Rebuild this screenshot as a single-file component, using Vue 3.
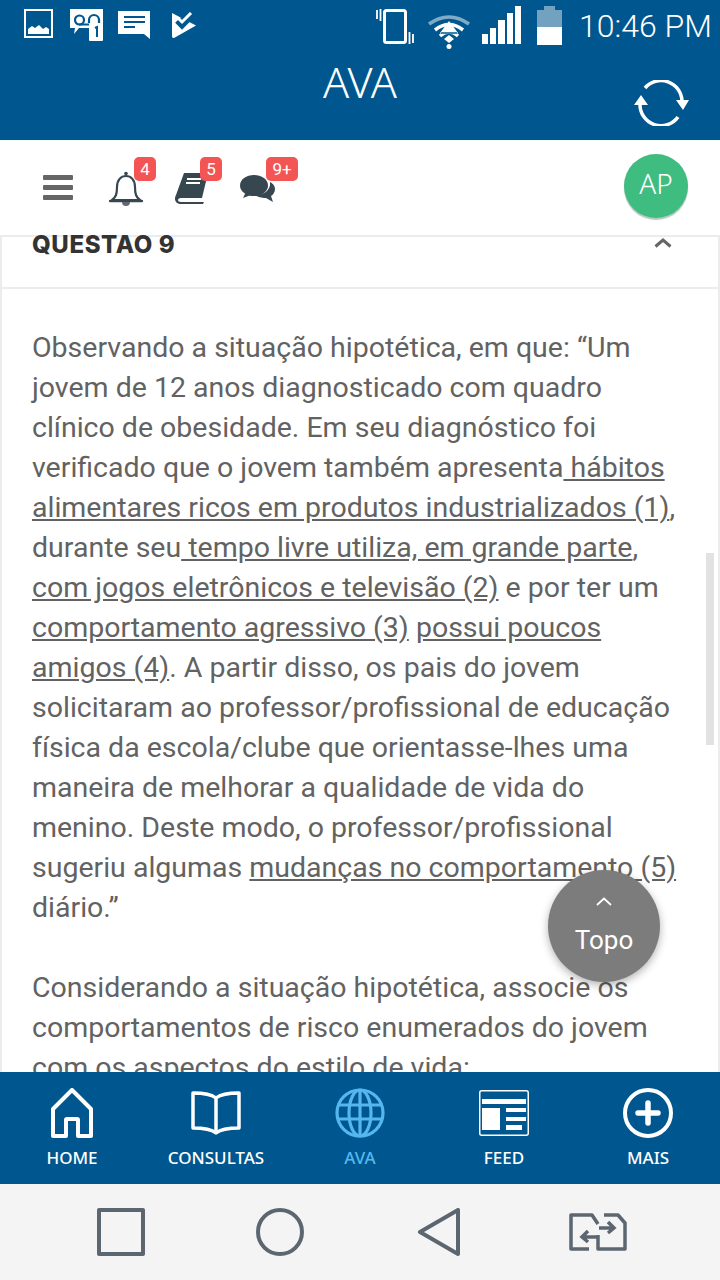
<script setup>
// tela de questao do AVA
const question = 'QUESTAO 9'
</script>

<template>
  <div class="screen">
    <header class="top">
      <div class="status">
        <div class="status-left">
          <svg width="30" height="30" viewBox="0 0 30 30"><rect x="1" y="1" width="27" height="27" fill="none" stroke="#fff" stroke-width="2"/><path d="M4 25v-5l4-3 3 2 4-3 4 4 3-2 3 2v5z" fill="#fff"/></svg>
          <svg class="ml-voice" width="34" height="32" viewBox="0 0 34 32"><path d="M0 0h33v21h-11v-2H9l-5 6 1-6H0z" fill="#fff"/><circle cx="9.500" cy="11" r="4.500" fill="none" stroke="#00578f" stroke-width="2.200"/><path d="M19 14v-3a5 5 0 0 1 10 0v3M9 15.500h15" fill="none" stroke="#00578f" stroke-width="2.200"/><rect x="19" y="14" width="14" height="18" rx="1" fill="#fff"/><path d="M25 19l2-1v10" fill="none" stroke="#00578f" stroke-width="2"/></svg>
          <svg class="ml-msg" width="33" height="30" viewBox="0 0 33 30"><path d="M0 0h32v28l-6-5H0z" fill="#fff"/><path d="M6 6h21M6 11h21M6 16h11" stroke="#00578f" stroke-width="2.200"/></svg>
          <svg class="ml-check" width="26" height="28" viewBox="0 0 26 28"><path d="M1 1l24 12.500L3 26q-2 .5-2-2z" fill="#fff"/><path d="M7 8l4 4 9-9" fill="none" stroke="#00578f" stroke-width="8"/><path d="M7 6l4 4 9-9" fill="none" stroke="#fff" stroke-width="3"/></svg>
        </div>
        <div class="status-right">
          <svg width="40" height="36" viewBox="0 0 40 36"><rect x="8.500" y="1.500" width="21" height="32" rx="2" fill="none" stroke="#fff" stroke-width="3"/><path d="M1 1v9M4.500 0v12M33.500 23v12M37 25v9" stroke="#fff" stroke-width="1.800"/></svg>
          <svg class="ml-wifi" width="44" height="36" viewBox="0 0 44 36"><path d="M2 11Q22-3 42 11" fill="none" stroke="#fff" stroke-opacity=".5" stroke-width="3.500"/><path d="M8 17Q22 6 36 17M13 23Q22 15 31 23" fill="none" stroke="#fff" stroke-width="3.500"/><path d="M22 8l9 12H13z" fill="#fff"/><path d="M14 20h16" stroke="#00578f" stroke-width="1.500"/><path d="M17 26l5 4 5-4-5-4z" fill="#fff"/><circle cx="22" cy="33.500" r="2.500" fill="#fff"/></svg>
          <svg class="ml-signal" width="39" height="38" viewBox="0 0 39 38"><path d="M0 28h6v10H0zM8 22h6v16H8zM16 14h7v24h-7zM25 7h6v31h-6zM33 0h6v38h-6z" fill="#fff"/></svg>
          <svg class="ml-battery" width="25" height="39" viewBox="0 0 25 39"><path d="M7 0h11v4h7v17H0V4h7z" fill="#fff" fill-opacity=".45"/><rect y="21" width="25" height="18" fill="#fff"/></svg>
          <span class="clock">10:46 PM</span>
        </div>
      </div>
      <div class="title-row">
        <h1 class="title">AVA</h1>
        <svg class="refresh" width="56" height="46" viewBox="0 0 56 46"><path d="M12 8A21 21 0 0 1 49 21" fill="none" stroke="#fff" stroke-width="3.500"/><path d="M7 24A21 21 0 0 0 45 37" fill="none" stroke="#fff" stroke-width="3.500"/><path d="M43 20h13l-6 10zM1 25l7-10 7 10z" fill="#fff"/></svg>
      </div>
    </header>

    <nav class="toolbar">
      <div class="burger"><i></i><i></i><i></i></div>
      <div class="tool tool-bell">
        <svg width="34" height="38" viewBox="0 0 34 38"><path d="M3 30c4-3 5-6 5-13 0-7 4-11 9-11s9 4 9 11c0 7 1 10 5 13z" fill="none" stroke="#37474f" stroke-width="2.200" stroke-linejoin="round"/><circle cx="17" cy="3.500" r="1.800" fill="#37474f"/><path d="M1 31h32" stroke="#37474f" stroke-width="2.500" stroke-linecap="round"/><path d="M13 32a4 4 0 0 0 8 0z" fill="#667"/></svg>
        <span class="badge">4</span>
      </div>
      <div class="tool tool-book">
        <svg width="34" height="31" viewBox="0 0 34 31"><path d="M9 0h24l-6 25H6c-2 0-3 1-3 2s1 2 3 2h23l-1 2H6c-3 0-6-2-6-5 0-1 0-2 1-4z" fill="#37474f"/><path d="M12 6h14M11 10h14" stroke="#fff" stroke-width="2.200"/></svg>
        <span class="badge">5</span>
      </div>
      <div class="tool tool-chat">
        <svg width="36" height="29" viewBox="0 0 36 29"><ellipse cx="14" cy="10.500" rx="14" ry="10.500" fill="#37474f"/><path d="M6 17l-3 6 8-3z" fill="#37474f"/><path d="M30 7c4 2 5 5 5 7 0 3-2 6-4 7l2 6-7-4c-4 0-9-1-11-3 8 0 16-4 15-13z" fill="#37474f"/></svg>
        <span class="badge badge-wide">9+</span>
      </div>
      <div class="avatar">AP</div>
    </nav>

    <main class="content">
      <section class="card">
        <div class="card-head">
          <h2>{{ question }}</h2>
          <svg width="18" height="10" viewBox="0 0 18 10"><path d="M1.500 8.500L9 2l7.500 6.500" fill="none" stroke="#666" stroke-width="3"/></svg>
        </div>
        <div class="card-body">
          <p>
            Observando a situação hipotética, em que: “Um<br>
            jovem de 12 anos diagnosticado com quadro<br>
            clínico de obesidade. Em seu diagnóstico foi<br>
            verificado que o jovem também apresenta<u> hábitos</u><br>
            <u>alimentares ricos em produtos industrializados (1)</u>,<br>
            durante seu<u> tempo livre utiliza, em grande parte</u>,<br>
            <u>com jogos eletrônicos e televisão (2)</u> e por ter um<br>
            <u>comportamento agressivo (3)</u> <u>possui poucos</u><br>
            <u>amigos (4)</u>. A partir disso, os pais do jovem<br>
            solicitaram ao professor/profissional de educação<br>
            física da escola/clube que orientasse-lhes uma<br>
            maneira de melhorar a qualidade de vida do<br>
            menino. Deste modo, o professor/profissional<br>
            sugeriu algumas <u>mudanças no comportamento (5)</u><br>
            diário.”
          </p>
          <p>
            Considerando a situação hipotética, associe os<br>
            comportamentos de risco enumerados do jovem<br>
            com os aspectos do estilo de vida:
          </p>
        </div>
      </section>
      <div class="scrollbar"></div>
      <button class="to-top">
        <svg width="16" height="9" viewBox="0 0 16 9"><path d="M1 8l7-6.500L15 8" fill="none" stroke="#fff" stroke-width="1.800"/></svg>
        <span>Topo</span>
      </button>
    </main>

    <footer class="tabs">
      <div class="tab">
        <svg width="44" height="50" viewBox="0 0 44 50"><path d="M22 2L3 21v27h13V32a1 1 0 0 1 1-1h10a1 1 0 0 1 1 1v16h13V21z" fill="none" stroke="#fff" stroke-width="4" stroke-linejoin="round"/></svg>
        <span>HOME</span>
      </div>
      <div class="tab">
        <svg width="50" height="44" viewBox="0 0 50 44"><path d="M25 7C20 3 10 2 2 2v35c8 0 18 1 23 5 5-4 15-5 23-5V2c-8 0-18 1-23 5zv34" fill="none" stroke="#fff" stroke-width="3.500" stroke-linejoin="round"/></svg>
        <span>CONSULTAS</span>
      </div>
      <div class="tab tab-active">
        <svg width="50" height="50" viewBox="0 0 50 50"><g fill="none" stroke="#55b7ee" stroke-width="3.200"><circle cx="25" cy="25" r="23"/><ellipse cx="25" cy="25" rx="11" ry="23"/><path d="M4 17h42M3 31h44M25 2v46"/></g></svg>
        <span>AVA</span>
      </div>
      <div class="tab">
        <svg width="50" height="46" viewBox="0 0 50 46"><rect x=".75" y=".75" width="48.500" height="44.500" rx="2" fill="none" stroke="#fff" stroke-width="1.500"/><path d="M3 9h44v5H3zM3 18h18v22H3zM27 18h20v4H27zM27 27h20v4H27zM27 35h16v5H27z" fill="#fff"/></svg>
        <span>FEED</span>
      </div>
      <div class="tab">
        <svg width="50" height="50" viewBox="0 0 50 50"><circle cx="25" cy="25" r="23" fill="none" stroke="#fff" stroke-width="4"/><path d="M25 15v20M15 25h20" stroke="#fff" stroke-width="5.500" stroke-linecap="round"/></svg>
        <span>MAIS</span>
      </div>
    </footer>

    <div class="system-nav">
      <svg width="48" height="48" viewBox="0 0 48 48"><rect x="2" y="2" width="44" height="44" fill="none" stroke="#5c6670" stroke-width="4" stroke-linejoin="round"/></svg>
      <svg width="48" height="48" viewBox="0 0 48 48"><circle cx="24" cy="24" r="22" fill="none" stroke="#5c6670" stroke-width="4"/></svg>
      <svg width="44" height="48" viewBox="0 0 44 48"><path d="M41 2v44L3 24z" fill="none" stroke="#5c6670" stroke-width="4" stroke-linejoin="round"/></svg>
      <svg width="58" height="38" viewBox="0 0 58 38"><path d="M20 36H2V2h21l6 9M35 2h14l7 8v26H29v-14" fill="none" stroke="#5c6670" stroke-width="3.500" stroke-linejoin="round"/><path d="M30 15h15M39 9l6 6-6 5M28 24H14M19 18l-6 6 6 5" fill="none" stroke="#5c6670" stroke-width="3.500"/></svg>
    </div>
  </div>
</template>

<style>
html, body { margin: 0; background: #fff; }
</style>

<style scoped>
.screen {
  width: 720px; height: 1280px; display: flex; flex-direction: column;
  overflow: hidden; font-family: Roboto, "Noto Sans", sans-serif;
}

/* barra azul */
.top { height: 140px; background: #00578f; color: #fff; flex: none; }
.status { display: flex; justify-content: space-between; height: 48px; padding: 6px 8px 0 24px; }
.status-left { display: flex; align-items: flex-start; padding-top: 3px; }
.status-left svg { flex: none; }
.ml-voice { margin-left: 16px; }
.ml-msg { margin-left: 14px; margin-top: 2px; }
.ml-check { margin-left: 20px; margin-top: 3px; }
.status-right { display: flex; align-items: flex-start; }
.status-right svg { flex: none; margin-top: 3px; }
.ml-wifi { margin-left: 11px; margin-top: 7px !important; }
.ml-signal { margin-left: 11px; margin-top: 0 !important; }
.ml-battery { margin-left: 16px; margin-top: 0 !important; }
.clock { margin-left: 17px; font-size: 32px; line-height: 40px; font-weight: 300; }
.title-row { position: relative; text-align: center; }
.title { margin: 0; padding-top: 2px; font: 300 43px/52px "Noto Sans", sans-serif; }
.refresh { position: absolute; left: 633px; top: 26px; }

/* barra de ferramentas */
.toolbar { height: 95px; flex: none; background: #fff; display: flex; align-items: flex-start; padding: 0 32px 0 43px; box-shadow: inset 0 1px 0 #effcfc; }
.burger { width: 30px; margin-top: 35px; display: flex; flex-direction: column; gap: 5px; }
.burger i { display: block; height: 5px; border-radius: 1px; background: #666; }
.tool { position: relative; flex: none; }
.tool svg { display: block; }
.tool-bell { margin: 30px 0 0 36px; width: 34px; }
.tool-book { margin: 33px 0 0 32px; width: 34px; }
.tool-chat { margin: 35px 0 0 31px; width: 36px; }
.badge {
  position: absolute; display: block; height: 24px; width: 22px; background: #f35555; color: #fff;
  border-radius: 5px; text-align: center; font: 400 17px/24px Roboto, sans-serif;
}
.tool-bell .badge { left: 25px; top: -13px; }
.tool-book .badge { left: 25px; top: -16px; }
.tool-chat .badge { left: 26px; top: -18px; }
.badge-wide { width: 32px; }
.avatar {
  margin: 14px 0 0 auto; width: 64px; height: 64px; border-radius: 50%; background: #3fbc80; color: #fff;
  font: 300 28px/58px "Noto Sans", sans-serif; text-align: center; box-shadow: 0 2px 1px #b5c9bf; flex: none;
}

/* conteudo */
.content { position: relative; flex: 1; min-height: 0; overflow: hidden; background: #fff; }
.card { border: 2px solid #ececec; border-bottom: 0; }
.card-head { height: 50px; display: flex; justify-content: space-between; padding: 0 46px 0 30px; border-bottom: 2px solid #ececec; }
.card-head h2 { margin: 0; font: 800 24px/16px Inter, "Liberation Sans", sans-serif; letter-spacing: .6px; color: #333; }
.card-head svg { margin-top: 1px; }
.card-body { padding: 39px 30px 0; color: #626262; font-size: 28.500px; line-height: 40px; }
.card-body p { margin: 0 0 40px; white-space: nowrap; }
.scrollbar { position: absolute; left: 706px; top: 318px; width: 8px; height: 192px; background: #e2e2e2; }
.to-top {
  position: absolute; left: 548px; top: 635px; width: 112px; height: 112px; padding: 0; border: 0; border-radius: 50%;
  background: #7c7c7c; color: #fff; font: 400 26px/32px Roboto, sans-serif; display: flex; flex-direction: column; align-items: center;
  box-shadow: 0 3px 8px rgba(0, 0, 0, .3);
}
.to-top svg { margin-top: 27px; margin-bottom: 18px; }

/* abas */
.tabs { height: 112px; flex: none; background: #00578f; display: grid; grid-template-columns: repeat(5, 1fr); }
.tab { position: relative; display: flex; flex-direction: column; align-items: center; color: #fff; font: 500 17px/22px "Noto Sans", sans-serif; }
.tab svg { height: 50px; margin-top: 16px; }
.tab span { position: absolute; top: 75px; }
.tab-active { color: #55b7ee; }

/* navegacao do sistema */
.system-nav { height: 96px; flex: none; background: #f4f4f4; display: grid; grid-template-columns: repeat(4, 159px); padding-left: 41.500px; justify-items: center; align-items: center; }
</style>
